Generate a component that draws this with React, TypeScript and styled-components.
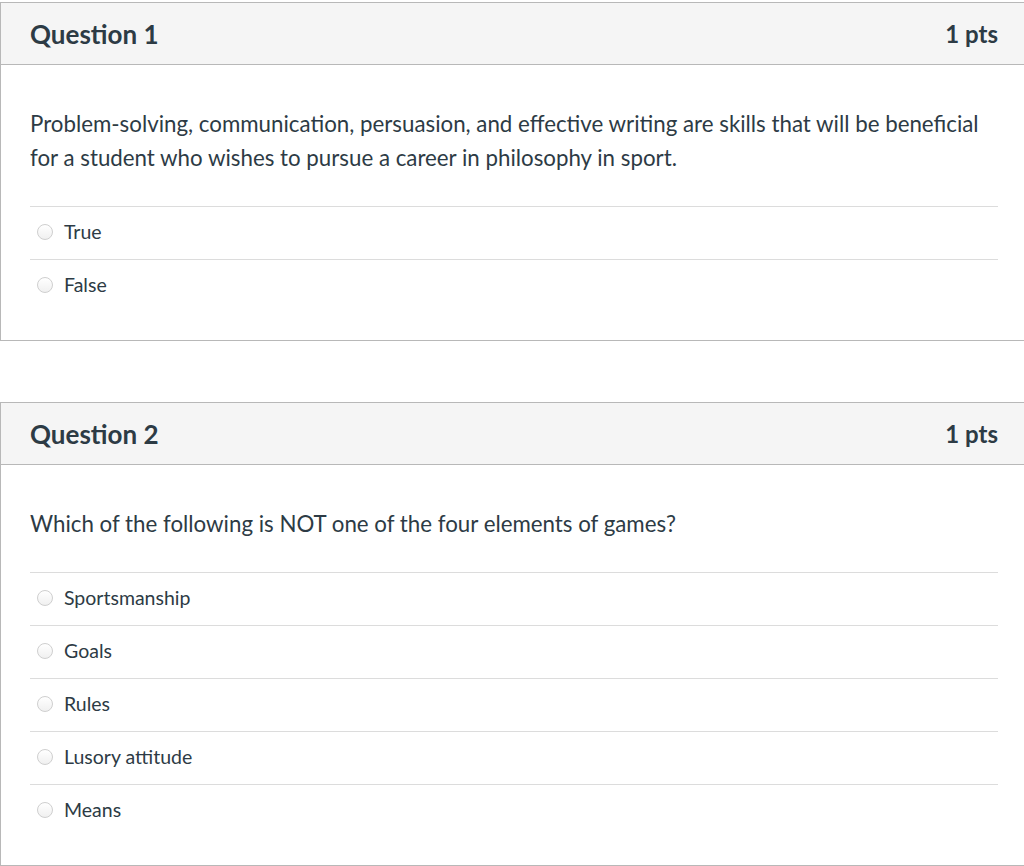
import React from 'react';
import styled, { createGlobalStyle } from 'styled-components';

const GlobalStyle = createGlobalStyle`
  html, body {
    margin: 0;
    padding: 0;
    background: #ffffff;
    font-family: Lato, 'Liberation Sans', sans-serif;
    color: #2d3b45;
  }
`;

const Page = styled.div`
  display: flex;
  flex-direction: column;
  gap: 61px;
  padding-top: 2px;
  width: 1026px;
`;

const Card = styled.div`
  border: 1px solid #b8b8b8;
  background: #ffffff;
`;

const Header = styled.div`
  display: flex;
  justify-content: space-between;
  align-items: center;
  height: 61px;
  padding: 0 27px 0 29px;
  background: #f5f5f5;
  border-bottom: 1px solid #b8b8b8;
`;

const Title = styled.h2`
  margin: 0;
  font-size: 26px;
  font-weight: 700;
  color: #2d3b45;
`;

const Points = styled.div`
  font-size: 24px;
  font-weight: 700;
  color: #2d3b45;
`;

const Body = styled.div`
  padding: 42px 27px 28px 29px;
`;

const Prompt = styled.p`
  margin: 0 0 31px;
  font-size: 22.3px;
  line-height: 34px;
`;

const AnswerRow = styled.label`
  display: flex;
  align-items: center;
  gap: 11px;
  height: 53px;
  padding: 0 0 3px 7px;
  box-sizing: border-box;
  border-top: 1px solid #dcdcdc;
  font-size: 19.5px;
  color: #2d3b45;
`;

const Radio = styled.span`
  width: 16px;
  height: 16px;
  border-radius: 50%;
  border: 1px solid #cfcfcf;
  background: linear-gradient(#ffffff, #f0f0f0);
  box-sizing: border-box;
  flex-shrink: 0;
`;

type Question = {
  title: string;
  points: string;
  prompt: string;
  answers: string[];
};

const questions: Question[] = [
  {
    title: 'Question 1',
    points: '1 pts',
    prompt:
      'Problem-solving, communication, persuasion, and effective writing are skills that will be beneficial for a student who wishes to pursue a career in philosophy in sport.',
    answers: ['True', 'False'],
  },
  {
    title: 'Question 2',
    points: '1 pts',
    prompt: 'Which of the following is NOT one of the four elements of games?',
    answers: ['Sportsmanship', 'Goals', 'Rules', 'Lusory attitude', 'Means'],
  },
];

function QuestionCard({ question }: { question: Question }): JSX.Element {
  return (
    <Card>
      <Header>
        <Title>{question.title}</Title>
        <Points>{question.points}</Points>
      </Header>
      <Body>
        <Prompt>{question.prompt}</Prompt>
        {question.answers.map((answer) => (
          <AnswerRow key={answer}>
            <Radio />
            {answer}
          </AnswerRow>
        ))}
      </Body>
    </Card>
  );
}

export default function App(): JSX.Element {
  return (
    <>
      <GlobalStyle />
      <Page>
        {questions.map((q) => (
          <QuestionCard key={q.title} question={q} />
        ))}
      </Page>
    </>
  );
}
